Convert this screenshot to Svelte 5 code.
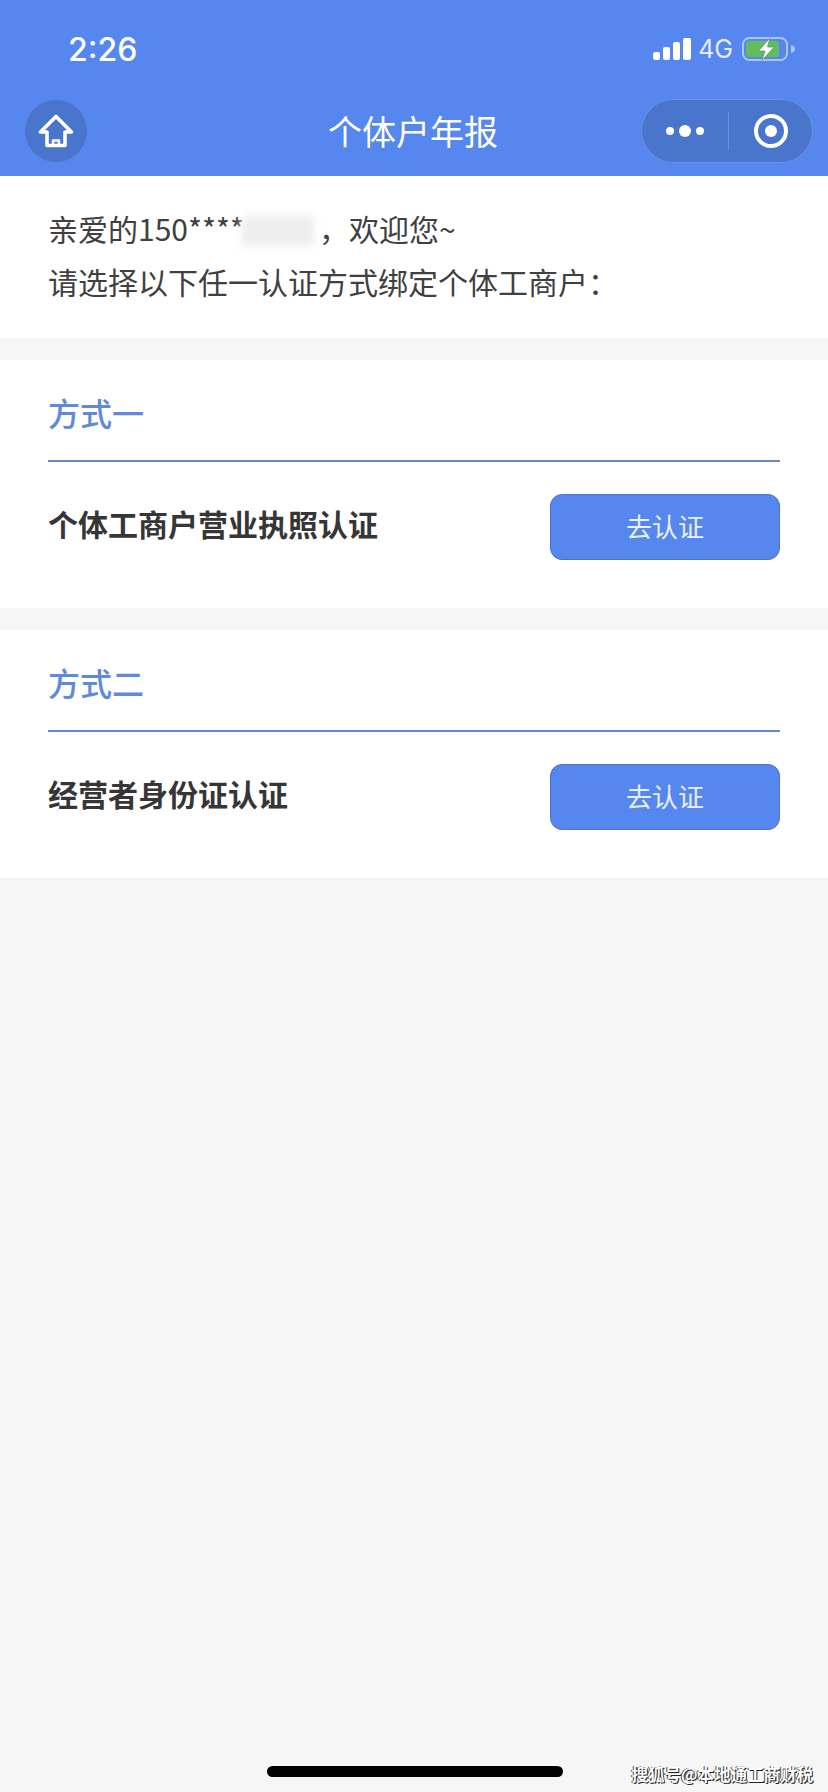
<script>
  const methods = [
    { title: '方式一', label: '个体工商户营业执照认证' },
    { title: '方式二', label: '经营者身份证认证' }
  ];
</script>

<div class="page">
  <header class="top">
    <div class="status">
      <span class="time">2:26</span>
      <div class="status-right">
        <svg class="signal" width="38" height="22" viewBox="0 0 38 22" aria-hidden="true">
          <rect x="0" y="14" width="7" height="8" rx="2" fill="#fff"/>
          <rect x="10" y="9" width="7" height="13" rx="2" fill="#fff"/>
          <rect x="20" y="4" width="7" height="18" rx="2" fill="#fff"/>
          <rect x="30" y="0" width="8" height="22" rx="2" fill="#fff"/>
        </svg>
        <span class="net">4G</span>
        <svg class="battery" width="54" height="24" viewBox="0 0 54 24" aria-hidden="true">
          <rect x="1" y="1" width="44" height="22" rx="6.500" fill="none" stroke="#a9c6f5" stroke-width="2"/>
          <rect x="4" y="4" width="33" height="16" rx="3" fill="#62bd5e"/>
          <path d="M49 8c2.500.5 4 2 4 4s-1.500 3.500-4 4z" fill="#a9c6f5"/>
          <path d="M28 1 16.500 14h6.500l-3 9.500L32 10h-6.500z" fill="#fff" stroke="#5a9a6a" stroke-width=".8"/>
        </svg>
      </div>
    </div>
    <div class="nav">
      <button class="home" aria-label="首页">
        <svg width="36" height="34" viewBox="0 0 36 34" fill="none" stroke="#fff" stroke-width="3.600" stroke-linejoin="round" stroke-linecap="round" aria-hidden="true">
          <path d="M18 2.500 2.500 18H9V31.500H27V18H33.500Z"/>
          <path d="M15 31V26.500H21V31" stroke-width="2.600"/>
        </svg>
      </button>
      <h1>个体户年报</h1>
      <div class="capsule">
        <div class="dots" aria-hidden="true"><i></i><i class="big"></i><i></i></div>
        <span class="sep"></span>
        <div class="target" aria-hidden="true"><i></i></div>
      </div>
    </div>
  </header>

  <section class="intro">
    <p>亲爱的150****<span class="blur"></span>，欢迎您~</p>
    <p>请选择以下任一认证方式绑定个体工商户：</p>
  </section>

  {#each methods as m}
    <section class="card">
      <h2>{m.title}</h2>
      <div class="row">
        <span class="label">{m.label}</span>
        <button class="go">去认证</button>
      </div>
    </section>
  {/each}

  <div class="bottom">
    <span class="indicator"></span>
    <span class="mark">搜狐号@本地通工商财税</span>
  </div>
</div>

<style>
  :global(body) {
    margin: 0;
    background: #f6f6f6;
  }
  .page {
    height: 1792px;
    display: flex;
    flex-direction: column;
    position: relative;
    background: #f6f6f6;
    font-family: "Noto Sans CJK SC", "Liberation Sans", sans-serif;
    color: #333;
    overflow: hidden;
  }
  .top {
    height: 176px;
    background: #5587ee;
    color: #fff;
    flex: none;
    display: flex;
    flex-direction: column;
  }
  .status {
    height: 100px;
    box-sizing: border-box;
    padding: 0 32px 2px 68px;
    display: flex;
    justify-content: space-between;
    align-items: center;
  }
  .time {
    font-family: Inter, sans-serif;
    font-size: 32px;
    font-weight: 500;
  }
  .status-right {
    display: flex;
    align-items: center;
    gap: 7px;
  }
  .net {
    font-family: Inter, sans-serif;
    font-size: 25px;
    color: #e6eefd;
    margin-right: 2px;
  }
  .nav {
    height: 62px;
    padding: 0 15px 0 25px;
    display: flex;
    align-items: center;
    justify-content: space-between;
    position: relative;
  }
  .home {
    width: 62px;
    height: 62px;
    border: 0;
    padding: 0;
    border-radius: 50%;
    background: #4a75cd;
    display: flex;
    align-items: center;
    justify-content: center;
  }
  h1 {
    margin: 0;
    position: absolute;
    left: 328px;
    font-size: 34px;
    line-height: 62px;
    font-weight: 400;
  }
  .capsule {
    width: 172px;
    height: 64px;
    box-sizing: border-box;
    border-radius: 32px;
    background: #4a75cd;
    box-shadow: inset 0 0 0 1px #6a93e8;
    display: flex;
    align-items: center;
  }
  .dots {
    width: 87px;
    display: flex;
    align-items: center;
    justify-content: center;
    gap: 5px;
  }
  .dots i {
    width: 8px;
    height: 8px;
    border-radius: 50%;
    background: #fff;
  }
  .dots i.big {
    width: 12px;
    height: 12px;
  }
  .sep {
    width: 1px;
    height: 38px;
    background: #6a90dc;
  }
  .target {
    flex: 1;
    display: flex;
    align-items: center;
    justify-content: center;
  }
  .target i {
    width: 34px;
    height: 34px;
    box-sizing: border-box;
    border: 4px solid #fff;
    border-radius: 50%;
    display: flex;
    align-items: center;
    justify-content: center;
  }
  .target i::after {
    content: "";
    width: 12px;
    height: 12px;
    border-radius: 50%;
    background: #fff;
  }
  .intro {
    height: 162px;
    flex: none;
    box-sizing: border-box;
    background: #fff;
    padding: 26px 48px 0;
    margin-bottom: 22px;
  }
  .intro p {
    margin: 0;
    font-size: 30px;
    line-height: 53px;
    white-space: nowrap;
    color: #404040;
    font-weight: 400;
  }
  .blur {
    display: inline-block;
    width: 72px;
    height: 30px;
    margin: 0 5px 0 -2px;
    vertical-align: -5px;
    background: #ededed;
    filter: blur(4px);
  }
  .card {
    height: 248px;
    flex: none;
    box-sizing: border-box;
    background: #fff;
    padding: 0 48px;
    margin-bottom: 22px;
  }
  h2 {
    margin: 0;
    height: 102px;
    box-sizing: border-box;
    border-bottom: 2px solid #6488c0;
    font-size: 32px;
    line-height: 105px;
    font-weight: 500;
    color: #5f8ad9;
  }
  .row {
    display: flex;
    align-items: center;
    justify-content: space-between;
    margin-top: 32px;
  }
  .label {
    font-size: 30px;
    font-weight: 700;
    color: #363636;
    margin-bottom: 9px;
  }
  .go {
    width: 230px;
    height: 66px;
    border: 1px solid #4c74c4;
    border-radius: 12px;
    background: #5587ee;
    color: #eaf1fd;
    font: inherit;
    font-size: 26px;
    font-weight: 400;
    padding: 0 0 4px;
  }
  .bottom {
    position: absolute;
    left: 0;
    right: 0;
    bottom: 0;
    height: 62px;
  }
  .indicator {
    position: absolute;
    left: 267px;
    top: 36px;
    width: 296px;
    height: 11px;
    border-radius: 6px;
    background: #000;
  }
  .mark {
    position: absolute;
    right: 15px;
    top: 32px;
    font-size: 16.500px;
    line-height: 24px;
    font-weight: 700;
    color: #fff;
    text-shadow: 1px 1px 0 #222, -1px 0 0 #444;
    white-space: nowrap;
  }
</style>
